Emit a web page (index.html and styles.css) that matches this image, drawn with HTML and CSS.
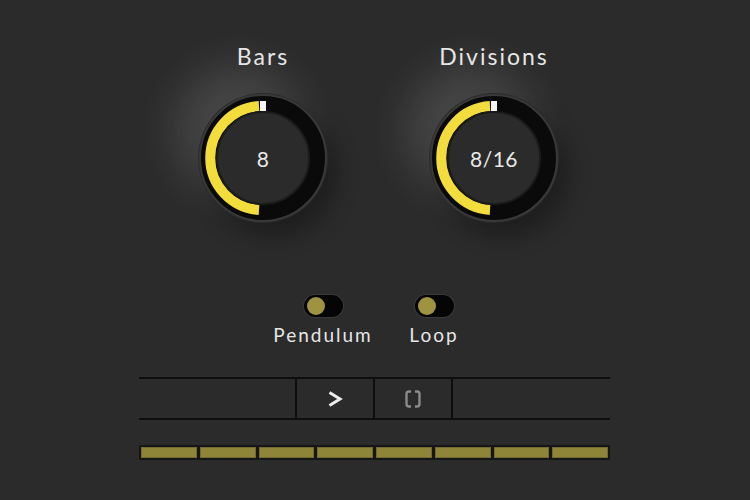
FILE: index.html
```html
<!DOCTYPE html>
<html>
<head>
<meta charset="utf-8">
<link rel="stylesheet" href="styles.css">
</head>
<body>
<div class="app">
  <div class="knobs">
    <div class="knob-col">
      <div class="title">Bars</div>
      <div class="knob">
        <svg class="knob-svg" width="130" height="130" viewBox="0 0 130 130">
          <circle cx="65" cy="65" r="63" fill="#0a0a0a" stroke="#393939" stroke-width="2"/>
          <path d="M 61 13.1 A 52 52 0 0 0 61 116.9" fill="none" stroke="#f2dd3c" stroke-width="10"/>
          <rect x="62" y="8" width="6" height="10" fill="#f4f4f4"/>
          <circle cx="65" cy="65" r="46" fill="#2b2b2b" stroke="#1c1c1c" stroke-width="2"/>
        </svg>
        <div class="value">8</div>
      </div>
    </div>
    <div class="knob-col">
      <div class="title">Divisions</div>
      <div class="knob">
        <svg class="knob-svg" width="130" height="130" viewBox="0 0 130 130">
          <circle cx="65" cy="65" r="63" fill="#0a0a0a" stroke="#393939" stroke-width="2"/>
          <path d="M 61 13.1 A 52 52 0 0 0 61 116.9" fill="none" stroke="#f2dd3c" stroke-width="10"/>
          <rect x="62" y="8" width="6" height="10" fill="#f4f4f4"/>
          <circle cx="65" cy="65" r="46" fill="#2b2b2b" stroke="#1c1c1c" stroke-width="2"/>
        </svg>
        <div class="value">8/16</div>
      </div>
    </div>
  </div>

  <div class="toggles">
    <div class="toggle-col">
      <div class="toggle"><span class="thumb"></span></div>
      <div class="toggle-label">Pendulum</div>
    </div>
    <div class="toggle-col">
      <div class="toggle"><span class="thumb"></span></div>
      <div class="toggle-label">Loop</div>
    </div>
  </div>

  <div class="transport">
    <div class="cell"></div>
    <div class="cell">
      <svg width="18" height="18" viewBox="0 0 18 18"><path d="M3.5 2.5 L14 9 L3.5 15.5" fill="none" stroke="#ececec" stroke-width="3" stroke-linejoin="miter"/></svg>
    </div>
    <div class="cell">
      <svg width="18" height="20" viewBox="0 0 18 20"><path d="M7 2.5 H5 Q2.5 2.5 2.5 5 V15 Q2.5 17.5 5 17.5 H7 M11 2.5 H13 Q15.5 2.5 15.5 5 V15 Q15.5 17.5 13 17.5 H11" fill="none" stroke="#8a8a8a" stroke-width="2.4"/></svg>
    </div>
    <div class="cell"></div>
  </div>

  <div class="steps">
    <div class="step"></div><div class="step"></div><div class="step"></div><div class="step"></div>
    <div class="step"></div><div class="step"></div><div class="step"></div><div class="step"></div>
  </div>
</div>
</body>
</html>
```

FILE: styles.css
```css
html, body {
  margin: 0;
  padding: 0;
}
body {
  width: 750px;
  height: 500px;
  background: #2b2b2b;
  font-family: "Lato", "Open Sans", sans-serif;
  color: #e4e4e4;
  overflow: hidden;
}
.app {
  display: flex;
  flex-direction: column;
  padding-top: 42px;
}
.knobs {
  display: flex;
  gap: 101px;
  margin-left: 198px;
}
.knob-col {
  width: 130px;
  display: flex;
  flex-direction: column;
  align-items: center;
}
.title {
  font-size: 23px;
  letter-spacing: 2px;
  line-height: 28px;
  color: #e6e6e6;
  white-space: nowrap;
}
.knob {
  margin-top: 23px;
  width: 130px;
  height: 130px;
  border-radius: 50%;
  display: grid;
  place-items: center;
  box-shadow: -24px -28px 44px rgba(255,255,255,0.13), 10px 14px 22px rgba(0,0,0,0.3);
}
.knob-svg, .value {
  grid-area: 1 / 1;
}
.value {
  font-size: 21px;
  letter-spacing: 0.5px;
  color: #e8e8e8;
}
.toggles {
  display: flex;
  gap: 34px;
  margin-top: 72px;
  margin-left: 271px;
}
.toggle-col {
  display: flex;
  flex-direction: column;
  align-items: center;
  gap: 6px;
}
.toggle {
  width: 39px;
  height: 22px;
  border-radius: 11px;
  background: #050505;
  box-shadow: 0 0 0 1px #3a3a3a;
  display: flex;
  align-items: center;
  padding-left: 3px;
  box-sizing: border-box;
}
.thumb {
  width: 18px;
  height: 18px;
  border-radius: 50%;
  background: #9f9341;
}
.toggle-label {
  font-size: 19px;
  letter-spacing: 2px;
  line-height: 24px;
  color: #e6e6e6;
  white-space: nowrap;
}
.toggles .toggle-col:first-child { width: 104px; }
.toggles .toggle-col:last-child { width: 50px; }
.transport {
  margin-top: 30px;
  margin-left: 139px;
  width: 471px;
  height: 39px;
  display: grid;
  grid-template-columns: 156px 78px 78px 1fr;
  border-top: 2px solid #0e0e0e;
  border-bottom: 2px solid #0e0e0e;
}
.cell {
  display: flex;
  align-items: center;
  justify-content: center;
  border-left: 2px solid #0e0e0e;
}
.cell:first-child { border-left: none; }
.steps {
  margin-top: 25px;
  margin-left: 139px;
  width: 471px;
  height: 15px;
  box-sizing: border-box;
  display: flex;
  gap: 3px;
  padding: 2px;
  background: #161616;
}
.step {
  flex: 1;
  background: #8f8539;
  box-shadow: inset 0 0 0 1px #736b31;
}
```
